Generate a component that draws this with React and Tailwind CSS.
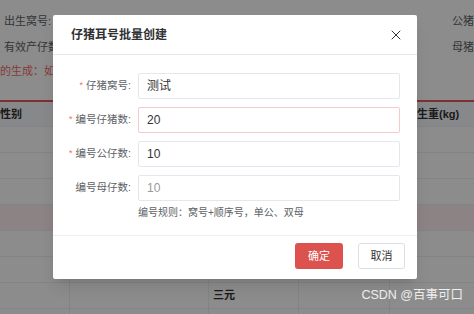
import { X } from 'lucide-react'

const font = "font-['Helvetica_Neue','Liberation_Sans','Noto_Sans_CJK_SC',sans-serif]"

const fields = [
    { label: '仔猪窝号:', value: '测试', required: true },
    { label: '编号仔猪数:', value: '20', required: true, error: true },
    { label: '编号公仔数:', value: '10', required: true },
    { label: '编号母仔数:', value: '10', placeholder: true },
]

function TableRow({ pink, children }) {
    return (
        <div className={`grid grid-cols-[70px_139px_90px_91px_84px] h-[26px] border-b border-[#ebeef5] ${pink ? 'bg-[#fff0f0]' : 'bg-white'}`}>
            <div className="border-r border-[#ebeef5]" />
            <div className="border-r border-[#ebeef5]" />
            <div className="border-r border-[#ebeef5] flex items-center pl-[4px] text-[11px] font-semibold text-[#303133]">{children}</div>
            <div className="border-r border-[#ebeef5]" />
            <div />
        </div>
    )
}

export default function App() {
    return (
        <div className={`relative w-[474px] h-[314px] overflow-hidden bg-white ${font}`}>
            {/* Page behind the dialog */}
            <div className="pt-[8px]">
                <div className="flex h-[26px] items-center text-[11px] text-[#606266] whitespace-nowrap">
                    <span className="w-[452px] shrink-0 pl-[4px]">出生窝号:</span>
                    <span className="shrink-0">公猪</span>
                </div>
                <div className="flex h-[26px] items-center text-[11px] text-[#606266] whitespace-nowrap">
                    <span className="w-[452px] shrink-0 pl-[4px]">有效产仔数:</span>
                    <span className="shrink-0">母猪</span>
                </div>
                <div className="flex h-[22px] items-center text-[11px] text-[#f56c6c] whitespace-nowrap">
                    <span>的生成：如提示编号已存在请修改窝号</span>
                </div>
                <div className="h-[18px]" />
                <div className="h-[2px] bg-[#e65a5a]" />
                <div className="flex h-[25px] items-center bg-[#f5f7fa] border-b border-[#ebeef5] text-[11px] font-semibold text-[#303133] whitespace-nowrap">
                    <span className="w-[406px] shrink-0">性别</span>
                    <span className="shrink-0">出生重(kg)</span>
                </div>
                <TableRow />
                <TableRow />
                <TableRow />
                <TableRow pink />
                <TableRow />
                <TableRow />
                <TableRow>三元</TableRow>
                <TableRow />
            </div>

            {/* Overlay */}
            <div className="absolute inset-0 bg-black/[0.45]" />

            {/* Dialog */}
            <div className="absolute left-[53px] top-[15px] w-[364px] h-[264px] bg-white rounded-[2px] shadow-lg flex flex-col">
                <div className="h-[40px] flex items-center justify-between pl-[18px] pr-[13px] border-b border-[#e8e8e8]">
                    <span className="text-[12px] font-semibold text-[#303133]">仔猪耳号批量创建</span>
                    <X className="w-[16px] h-[16px] text-[#333]" strokeWidth={1.5} />
                </div>

                <div className="flex-1 pt-[18px] pr-[17px]">
                    <div className="flex flex-col gap-[8px]">
                        {fields.map((f) => (
                            <div key={f.label} className="flex items-center h-[26px]">
                                <label className="w-[78px] flex justify-end items-center gap-[3px] text-[10.5px] text-[#606266] whitespace-nowrap">
                                    {f.required && <span className="text-[#f56c6c] text-[9px]">*</span>}
                                    <span>{f.label}</span>
                                </label>
                                <div className={`ml-[7px] flex-1 h-[26px] flex items-center pl-[8px] border rounded-[2px] text-[12px] ${f.error ? 'border-[#f7caca]' : 'border-[#e4e7ed]'} ${f.placeholder ? 'text-[#999]' : 'text-[#333]'}`}>
                                    {f.value}
                                </div>
                            </div>
                        ))}
                    </div>
                    <div className="ml-[85px] mt-[4px] text-[10px] text-[#606266] whitespace-nowrap">
                        编号规则：窝号+顺序号，单公、双母
                    </div>
                </div>

                <div className="h-[44px] border-t border-[#eeeeee] flex items-start justify-end gap-[15px] pt-[7px] pr-[12px]">
                    <button className="w-[48px] h-[26px] rounded-[3px] bg-[#dc524e] text-white text-[11px]">确定</button>
                    <button className="w-[47px] h-[26px] rounded-[3px] bg-white border border-[#dcdfe6] text-[#333] text-[11px]">取消</button>
                </div>
            </div>

            {/* Watermark */}
            <div className="absolute right-[11px] bottom-[9px] text-[12.5px] text-white/85 whitespace-nowrap">CSDN @百事可口</div>
        </div>
    )
}
